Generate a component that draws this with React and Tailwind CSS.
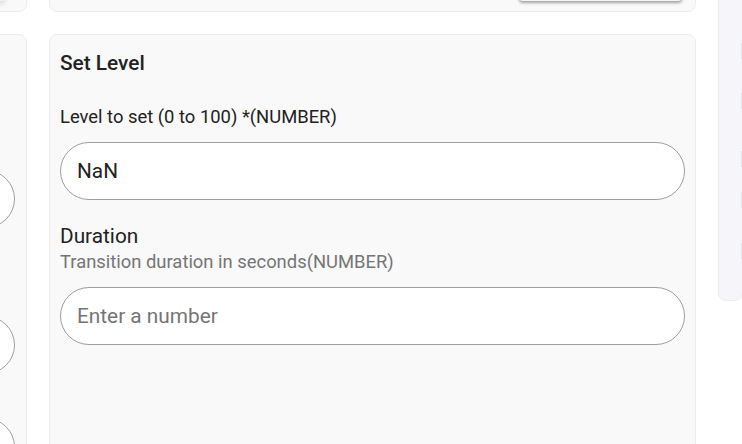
import React from "react";

const font = { fontFamily: "Roboto, 'Noto Sans', sans-serif" };

const Field = ({ value, placeholder }) => (
  <input
    readOnly
    defaultValue={value}
    placeholder={placeholder}
    className="h-[58px] w-full rounded-full border border-[#9e9e9e] bg-white px-[16px] text-[20.8px] text-[#222] outline-none placeholder:text-[#757575]"
  />
);

const App = () => {
  return (
    <div className="min-h-screen overflow-hidden bg-white" style={font}>
      <div className="mt-[-60px] ml-[-213px] flex items-start gap-[22px]">
        <div className="grid grid-cols-[240px_647px] gap-[22px]">
          {/* top row */}
          <div className="flex h-[72px] items-end justify-end rounded-lg border border-[#ececec] bg-[#f9f9f9] pr-[20px] pb-[10px]">
            <div className="h-[40px] w-[120px] rounded bg-[#f2f2f2] shadow-md" />
          </div>
          <div className="flex h-[72px] items-end justify-end rounded-lg border border-[#ececec] bg-[#f9f9f9] pr-[13px] pb-[10px]">
            <button className="h-[40px] w-[163px] rounded bg-[#f5f5f5] shadow-[0_2px_3px_rgba(0,0,0,0.35)]" />
          </div>

          {/* second row */}
          <div className="h-[420px] rounded-lg border border-[#ececec] bg-[#f9f9f9] px-[11px] pt-[135px]">
            <Field value="" />
            <div className="h-[88px]" />
            <Field value="" />
            <div className="h-[44px]" />
            <Field value="" />
          </div>

          <div className="h-[420px] rounded-lg border border-[#ececec] bg-[#f9f9f9] px-[10px] pt-[14px]">
            <h2 className="text-[20.8px] leading-[28px] font-medium text-[#222]">Set Level</h2>
            <p className="mt-[28px] text-[18.4px] leading-[24px] text-[#222]">
              Level to set (0 to 100) *(NUMBER)
            </p>
            <div className="mt-[13px]">
              <Field value="NaN" />
            </div>
            <p className="mt-[22px] text-[20.8px] leading-[28px] text-[#222]">Duration</p>
            <p className="text-[18.4px] leading-[24px] text-[#757575]">
              Transition duration in seconds(NUMBER)
            </p>
            <div className="mt-[13px]">
              <Field placeholder="Enter a number" />
            </div>
          </div>
        </div>

        <aside className="flex h-[361px] w-[240px] flex-col rounded-lg border border-[#ebebf0] bg-[#f6f6fa] pt-[102px] pl-[22px]">
          <div className="h-[16px] border-l border-[#e2e2ea]" />
          <div className="mt-[34px] h-[16px] border-l border-[#e2e2ea]" />
          <div className="mt-[42px] h-[16px] border-l border-[#e2e2ea]" />
          <div className="mt-[25px] h-[16px] border-l border-[#e2e2ea]" />
          <div className="mt-[35px] h-[16px] border-l border-[#e2e2ea]" />
        </aside>
      </div>
    </div>
  );
};

export default App;
